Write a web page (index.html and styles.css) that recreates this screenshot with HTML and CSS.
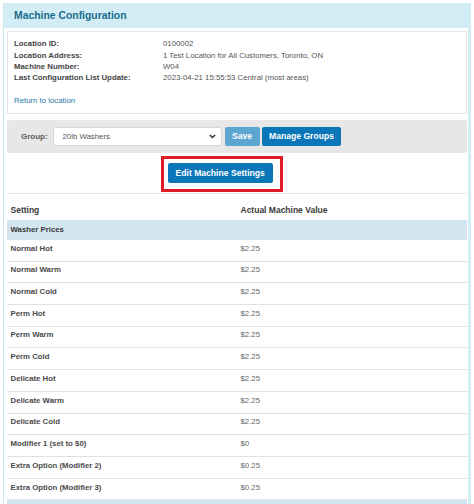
FILE: index.html
```html
<!DOCTYPE html>
<html>
<head>
<meta charset="utf-8">
<link rel="stylesheet" href="styles.css">
</head>
<body>
<div class="panel">
  <div class="panel-head">Machine Configuration</div>
  <div class="panel-body">
    <div class="info">
      <div class="info-row"><span class="lbl">Location ID:</span><span class="val">0100002</span></div>
      <div class="info-row"><span class="lbl">Location Address:</span><span class="val">1 Test Location for All Customers, Toronto, ON</span></div>
      <div class="info-row"><span class="lbl">Machine Number:</span><span class="val">W04</span></div>
      <div class="info-row"><span class="lbl">Last Configuration List Update:</span><span class="val">2023-04-21 15:55:53 Central (most areas)</span></div>
      <div class="info-gap"></div>
      <a class="link" href="#">Return to location</a>
    </div>

    <div class="groupbar">
      <span class="group-lbl">Group:</span>
      <div class="select"><span>20lb Washers</span>
        <svg class="chev" width="7" height="5" viewBox="0 0 7 5"><path d="M0.8 0.9 L3.5 3.6 L6.2 0.9" fill="none" stroke="#333" stroke-width="1.4"/></svg>
      </div>
      <button class="btn btn-light">Save</button>
      <button class="btn">Manage Groups</button>
    </div>

    <div class="edit-wrap">
      <div class="highlight"><button class="btn btn-edit">Edit Machine Settings</button></div>
    </div>

    <div class="tbl">
      <div class="thead"><span>Setting</span><span>Actual Machine Value</span></div>
      <div class="grp">Washer Prices</div>
      <div class="row"><span class="k">Normal Hot</span><span class="v">$2.25</span></div>
      <div class="row"><span class="k">Normal Warm</span><span class="v">$2.25</span></div>
      <div class="row"><span class="k">Normal Cold</span><span class="v">$2.25</span></div>
      <div class="row"><span class="k">Perm Hot</span><span class="v">$2.25</span></div>
      <div class="row"><span class="k">Perm Warm</span><span class="v">$2.25</span></div>
      <div class="row"><span class="k">Perm Cold</span><span class="v">$2.25</span></div>
      <div class="row"><span class="k">Delicate Hot</span><span class="v">$2.25</span></div>
      <div class="row"><span class="k">Delicate Warm</span><span class="v">$2.25</span></div>
      <div class="row"><span class="k">Delicate Cold</span><span class="v">$2.25</span></div>
      <div class="row"><span class="k">Modifier 1 (set to $0)</span><span class="v">$0</span></div>
      <div class="row"><span class="k">Extra Option (Modifier 2)</span><span class="v">$0.25</span></div>
      <div class="row"><span class="k">Extra Option (Modifier 3)</span><span class="v">$0.25</span></div>
      <div class="grp">&nbsp;</div>
    </div>
  </div>
</div>
</body>
</html>
```
FILE: styles.css
```css
html, body {
  margin: 0;
  padding: 0;
  background: #fff;
  font-family: "Liberation Sans", Arial, sans-serif;
  color: #333;
}
body {
  padding: 3px 3px 0 3px;
}
.panel {
  border-left: 1px solid #c9e7f3;
  border-right: 3px solid #d3edf7;
  min-height: 520px;
}
.panel-head {
  height: 24.5px;
  background: #d3edf7;
  display: flex;
  align-items: center;
  padding-left: 10px;
  font-size: 10.4px;
  font-weight: bold;
  color: #1b6c8c;
}
.panel-body {
  padding: 3.5px 1.5px 0 3px;
}
.info {
  border: 1px solid #e4e4e4;
  padding: 6.2px 6px 6.7px 6px;
  font-size: 7.8px;
  line-height: 11.33px;
}
.info-row {
  display: flex;
}
.lbl {
  width: 149px;
  font-weight: bold;
  color: #444;
}
.val {
  color: #555;
}
.info-gap {
  height: 11.33px;
}
.link {
  display: block;
  color: #2678a6;
  text-decoration: none;
}
.groupbar {
  margin-top: 6px;
  height: 33px;
  background: #e7e7e7;
  border-radius: 3px;
  display: flex;
  align-items: center;
  padding-left: 14px;
}
.group-lbl {
  font-size: 8px;
  font-weight: bold;
  color: #5a5a5a;
  width: 31.5px;
}
.select {
  width: 169px;
  height: 19.4px;
  box-sizing: border-box;
  background: #fff;
  border: 1px solid #d6d6d6;
  border-radius: 3px;
  display: flex;
  align-items: center;
  justify-content: space-between;
  padding: 0 5px 0 9px;
  font-size: 7.8px;
  color: #555;
}
.chev {
  display: block;
}
.btn {
  border: none;
  background: #0b76b8;
  color: #fff;
  font-family: "Liberation Sans", Arial, sans-serif;
  font-size: 8.6px;
  font-weight: bold;
  height: 19.4px;
  border-radius: 2px;
  padding: 0 7px;
  margin-left: 2.5px;
  cursor: pointer;
}
.groupbar .btn-light {
  background: #5ca6d1;
  margin-left: 3px;
  width: 35px;
  padding: 0;
}
.edit-wrap {
  padding-left: 154px;
  margin-top: 2.7px;
}
.highlight {
  display: inline-block;
  border: 3px solid #df1c24;
  padding: 4.6px 7.6px 5.4px 3.7px;
  line-height: 0;
}
.btn-edit {
  margin: 0;
  width: 105px;
  height: 20px;
  padding: 0;
}
.tbl {
  margin-top: 1.3px;
}
.thead {
  display: grid;
  grid-template-columns: 230px 1fr;
  height: 27px;
  box-sizing: border-box;
  border-top: 1px solid #e8e8e8;
  align-items: center;
  padding: 6px 0 0 3.5px;
  font-size: 8.5px;
  font-weight: bold;
  color: #3a3a3a;
}
.grp {
  height: 20px;
  background: #d4e5f2;
  display: flex;
  align-items: center;
  padding-left: 3.5px;
  font-size: 7.8px;
  font-weight: bold;
  color: #3a3a3a;
}
.row {
  display: grid;
  grid-template-columns: 230px 1fr;
  height: 21.73px;
  box-sizing: border-box;
  border-bottom: 1px solid #e0e0e0;
  padding: 2.8px 0 0 3.5px;
  font-size: 7.8px;
  line-height: 11px;
}
.k {
  font-weight: bold;
  color: #4a4a4a;
}
.v {
  color: #666;
}
```
